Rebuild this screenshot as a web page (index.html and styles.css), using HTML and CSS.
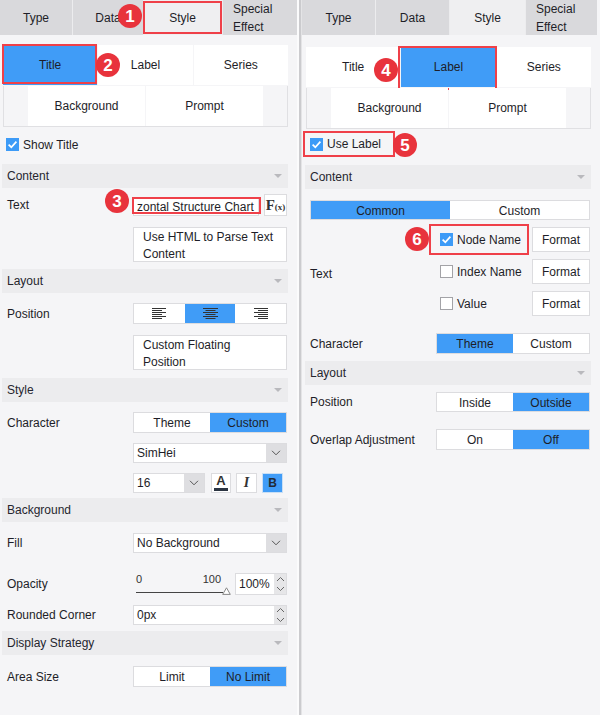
FILE: index.html
```html
<!DOCTYPE html>
<html>
<head>
<meta charset="utf-8">
<link rel="stylesheet" href="styles.css">
</head>
<body>
<div class="app">

  <div class="panel panel-left">
    <div class="tabs">
      <div class="tab t-type">Type</div>
      <div class="tab t-data">Data</div>
      <div class="tab t-style active mark-tab">Style</div>
      <div class="tab special">Special<br>Effect</div>
    </div>
    <div class="content">
      <div class="subtabs">
        <div class="srow">
          <div class="st sel mark-title">Title</div>
          <div class="st">Label</div>
          <div class="st">Series</div>
        </div>
        <div class="srow2">
          <div class="st">Background</div>
          <div class="st">Prompt</div>
        </div>
      </div>

      <div class="checkrow mt5">
        <span class="cb on"><svg width="13" height="13" viewBox="0 0 13 13"><path d="M2.6 6.6 L5.3 9.2 L10.4 3.6" fill="none" stroke="#fff" stroke-width="1.7"/></svg></span>
        <span>Show Title</span>
      </div>

      <div class="hdr mt7">Content</div>
      <div class="row h22 mt6 endrow">
        <div class="lbl">Text</div>
        <div class="ctl ctl-end">
          <div class="input box txt mark-input">zontal Structure Chart</div>
          <div class="fx box"><span class="fxF">F</span><span class="fxX">(x)</span></div>
        </div>
      </div>
      <div class="row mt11 nolbl">
        <div class="ctl"><div class="tbox box">Use HTML to Parse Text<br>Content</div></div>
      </div>

      <div class="hdr mt7">Layout</div>
      <div class="row h21 mt10">
        <div class="lbl">Position</div>
        <div class="ctl">
          <div class="seg seg3">
            <div><svg width="15" height="11" viewBox="0 0 15 11"><g stroke="#333" stroke-width="1"><path d="M0 0.5H14"/><path d="M0 2.5H10"/><path d="M0 4.5H14"/><path d="M0 6.5H10"/><path d="M0 8.5H14"/><path d="M0 10.5H10"/></g></svg></div>
            <div class="on"><svg width="15" height="11" viewBox="0 0 15 11"><g stroke="#333" stroke-width="1"><path d="M0 0.5H15"/><path d="M2.5 2.5H12.5"/><path d="M0 4.5H15"/><path d="M2.5 6.5H12.5"/><path d="M0 8.5H15"/><path d="M2.5 10.5H12.5"/></g></svg></div>
            <div><svg width="15" height="11" viewBox="0 0 15 11"><g stroke="#333" stroke-width="1"><path d="M1 0.5H15"/><path d="M5 2.5H15"/><path d="M1 4.5H15"/><path d="M5 6.5H15"/><path d="M1 8.5H15"/><path d="M5 10.5H15"/></g></svg></div>
          </div>
        </div>
      </div>
      <div class="row mt11 nolbl">
        <div class="ctl"><div class="tbox box">Custom Floating<br>Position</div></div>
      </div>

      <div class="hdr mt8">Style</div>
      <div class="row h21 mt10">
        <div class="lbl">Character</div>
        <div class="ctl">
          <div class="seg"><div>Theme</div><div class="on">Custom</div></div>
        </div>
      </div>
      <div class="row h20 mt10 nolbl">
        <div class="ctl">
          <div class="select box">
            <div class="val">SimHei</div>
            <div class="arr"><svg width="10" height="6" viewBox="0 0 10 6"><path d="M1 0.8 L5 4.8 L9 0.8" fill="none" stroke="#555" stroke-width="1"/></svg></div>
          </div>
        </div>
      </div>
      <div class="row h20 mt10 nolbl">
        <div class="ctl">
          <div class="select box fsize">
            <div class="val">16</div>
            <div class="arr"><svg width="10" height="6" viewBox="0 0 10 6"><path d="M1 0.8 L5 4.8 L9 0.8" fill="none" stroke="#555" stroke-width="1"/></svg></div>
          </div>
          <div class="fbtn box fa"><span class="aglyph">A</span><span class="abar"></span></div>
          <div class="fbtn box fi">I</div>
          <div class="fbtn box fb">B</div>
        </div>
      </div>

      <div class="hdr mt5">Background</div>
      <div class="row h20 mt11">
        <div class="lbl">Fill</div>
        <div class="ctl">
          <div class="select box">
            <div class="val">No Background</div>
            <div class="arr"><svg width="10" height="6" viewBox="0 0 10 6"><path d="M1 0.8 L5 4.8 L9 0.8" fill="none" stroke="#555" stroke-width="1"/></svg></div>
          </div>
        </div>
      </div>
      <div class="row h22 mt20">
        <div class="lbl">Opacity</div>
        <div class="ctl">
          <div class="slider">
            <div class="slabels"><span>0</span><span>100</span></div>
            <div class="strack"><span class="sline"></span><svg class="stri" width="9" height="8" viewBox="0 0 9 8"><path d="M0.7 7.4 L4.5 0.8 L8.3 7.4 Z" fill="#fff" stroke="#888" stroke-width="1"/></svg></div>
          </div>
          <div class="select box pct">
            <div class="val">100%</div>
            <div class="spin"><svg width="9" height="18" viewBox="0 0 9 18"><path d="M1 6 L4.5 2.5 L8 6" fill="none" stroke="#666" stroke-width="1"/><path d="M1 12 L4.5 15.5 L8 12" fill="none" stroke="#666" stroke-width="1"/></svg></div>
          </div>
        </div>
      </div>
      <div class="row h20 mt10">
        <div class="lbl">Rounded Corner</div>
        <div class="ctl">
          <div class="select box">
            <div class="val">0px</div>
            <div class="spin"><svg width="9" height="18" viewBox="0 0 9 18"><path d="M1 6 L4.5 2.5 L8 6" fill="none" stroke="#666" stroke-width="1"/><path d="M1 12 L4.5 15.5 L8 12" fill="none" stroke="#666" stroke-width="1"/></svg></div>
          </div>
        </div>
      </div>

      <div class="hdr mt6">Display Strategy</div>
      <div class="row h21 mt11">
        <div class="lbl">Area Size</div>
        <div class="ctl">
          <div class="seg"><div>Limit</div><div class="on">No Limit</div></div>
        </div>
      </div>
    </div>

    <div class="badge b1">1</div>
    <div class="badge b2">2</div>
    <div class="badge b3">3</div>
  </div>

  <div class="divider"></div>

  <div class="panel panel-right">
    <div class="tabs">
      <div class="tab t-type">Type</div>
      <div class="tab t-data">Data</div>
      <div class="tab t-style active">Style</div>
      <div class="tab special">Special<br>Effect</div>
    </div>
    <div class="content">
      <div class="subtabs">
        <div class="srow">
          <div class="st">Title</div>
          <div class="st sel mark-label">Label</div>
          <div class="st">Series</div>
        </div>
        <div class="srow2">
          <div class="st">Background</div>
          <div class="st">Prompt</div>
        </div>
      </div>

      <div class="checkrow uselabel">
        <span class="cb on"><svg width="13" height="13" viewBox="0 0 13 13"><path d="M2.6 6.6 L5.3 9.2 L10.4 3.6" fill="none" stroke="#fff" stroke-width="1.7"/></svg></span>
        <span>Use Label</span>
      </div>

      <div class="hdr mt8">Content</div>
      <div class="row h20 mt11">
        <div class="seg full"><div class="on">Common</div><div>Custom</div></div>
      </div>

      <div class="row mt7 textopts">
        <div class="lbl lbl-text">Text</div>
        <div class="opts">
          <div class="opt">
            <div class="optitem mark-node"><span class="cb on"><svg width="13" height="13" viewBox="0 0 13 13"><path d="M2.6 6.6 L5.3 9.2 L10.4 3.6" fill="none" stroke="#fff" stroke-width="1.7"/></svg></span><span>Node Name</span></div>
            <div class="fmt box">Format</div>
          </div>
          <div class="opt">
            <div class="optitem"><span class="cb"></span><span>Index Name</span></div>
            <div class="fmt box">Format</div>
          </div>
          <div class="opt">
            <div class="optitem"><span class="cb"></span><span>Value</span></div>
            <div class="fmt box">Format</div>
          </div>
        </div>
      </div>

      <div class="row h21 mt17">
        <div class="lbl">Character</div>
        <div class="ctl">
          <div class="seg"><div class="on">Theme</div><div>Custom</div></div>
        </div>
      </div>

      <div class="hdr mt7">Layout</div>
      <div class="row h20 mt7">
        <div class="lbl">Position</div>
        <div class="ctl">
          <div class="seg"><div>Inside</div><div class="on">Outside</div></div>
        </div>
      </div>
      <div class="row h21 mt17">
        <div class="lbl">Overlap Adjustment</div>
        <div class="ctl">
          <div class="seg"><div>On</div><div class="on">Off</div></div>
        </div>
      </div>
    </div>

    <div class="badge b4">4</div>
    <div class="badge b5">5</div>
    <div class="badge b6">6</div>
  </div>

</div>
</body>
</html>
```

FILE: styles.css
```css
* { box-sizing: border-box; }
html, body { margin: 0; padding: 0; }
body {
  width: 600px;
  height: 715px;
  overflow: hidden;
  background: #f5f5f7;
  font-family: "Liberation Sans", Arial, sans-serif;
  font-size: 12px;
  color: #1e1e28;
}
.app { display: flex; height: 715px; }
.panel { position: relative; height: 715px; background: #f5f5f7; }
.panel-left { width: 297px; }
.panel-right { width: 298px; }
.divider {
  width: 5px;
  height: 715px;
  background: linear-gradient(to right, #fbfbfc 0, #fbfbfc 2px, #cbcbce 2px, #cbcbce 4px, #e4e4e6 4px);
}

/* top tabs */
.tabs { display: flex; height: 35px; background: #d9d9dc; }
.panel-right .tabs { margin-right: 3px; }
.tab {
  position: relative;
  display: flex;
  align-items: center;
  justify-content: center;
  border-right: 1px solid #ececee;
}
.t-type { width: 73px; }
.t-data { width: 70px; border-right: none; }
.t-style { width: 80px; }
.panel-right .t-type { width: 74px; }
.panel-right .t-data { width: 74px; border-right: 1px solid #ececee; }
.panel-right .t-style { width: 76px; }
.tab.active { background: #efeff1; }
.tab.special {
  flex: 1;
  justify-content: flex-start;
  padding-left: 10px;
  line-height: 18px;
  border-right: none;
}

/* red annotation boxes */
.mark-tab::after,
.mark-title::after,
.mark-label::after,
.mark-input::after,
.mark-node::after {
  content: "";
  position: absolute;
  border: 2px solid #ef4049;
  pointer-events: none;
}
.mark-tab::after { top: 1px; bottom: 1px; left: 0; right: 0; }
.mark-title::after { top: -1px; bottom: 1px; left: -1px; right: 0; }
.mark-label::after { top: -1px; bottom: -3px; left: -3px; right: -1px; }
.mark-input::after { top: -1px; bottom: 1px; left: -2px; right: -3px; }
.mark-node::after { top: -3px; bottom: -3px; left: -7px; right: 3px; }

/* badges */
.badge {
  position: absolute;
  width: 24px;
  height: 24px;
  border-radius: 50%;
  background: #e8333c;
  color: #fff;
  font-weight: bold;
  font-size: 17px;
  line-height: 1;
  display: flex;
  align-items: center;
  justify-content: center;
  z-index: 3;
}
.b1 { left: 118px; top: 4px; }
.b2 { left: 96px; top: 53px; }
.b3 { left: 105px; top: 189px; }
.b4 { left: 72px; top: 58px; }
.b5 { left: 91px; top: 133px; }
.b6 { left: 103px; top: 227px; }

/* content */
.content { padding: 0 9px 0 2px; }
.panel-right .content { padding-left: 3px; }

.subtabs { margin: 10px 0 0 1px; }
.panel-right .subtabs { margin-top: 12px; }
.srow { display: flex; gap: 1px; }
.st {
  position: relative;
  height: 40px;
  background: #fff;
  display: flex;
  align-items: center;
  justify-content: center;
}
.srow .st { flex: 1; }
.st.sel { background: #409cf7; }
.srow2 {
  display: flex;
  justify-content: center;
  gap: 1px;
  margin-top: 1px;
  height: 41px;
  border: 1px solid #e0e0e3;
  border-top: none;
}
.srow2 .st { width: 117px; }

.mt5 { margin-top: 5px; }
.mt6 { margin-top: 6px; }
.mt7 { margin-top: 7px; }
.mt8 { margin-top: 8px; }
.mt10 { margin-top: 10px; }
.mt11 { margin-top: 11px; }
.mt17 { margin-top: 17px; }
.mt20 { margin-top: 20px; }
.h20 { height: 20px; }
.h21 { height: 21px; }
.h22 { height: 22px; }

.checkrow {
  display: flex;
  align-items: center;
  gap: 4px;
  height: 25px;
  padding-left: 4px;
}
.uselabel {
  margin: 2px 0 0 -2px;
  width: 92px;
  height: 26px;
  border: 2px solid #ef4049;
  padding-left: 5px;
}
.cb {
  display: block;
  width: 13px;
  height: 13px;
  flex: 0 0 13px;
  background: #fff;
  border: 1px solid #a3a3a7;
}
.cb.on { background: #3d9bf7; border: none; }
.cb svg { display: block; }

.hdr {
  position: relative;
  height: 24px;
  background: #ececee;
  display: flex;
  align-items: center;
  padding-left: 5px;
  color: #26262e;
}
.hdr::after {
  content: "";
  position: absolute;
  right: 6px;
  top: 10px;
  border-left: 4px solid transparent;
  border-right: 4px solid transparent;
  border-top: 4px solid #b9b9bd;
}

.row { display: flex; align-items: center; padding: 0 1px 0 5px; }
.row.nolbl { padding-left: 131px; }
.row.endrow { align-items: center; }
.lbl { flex: 0 0 126px; }
.ctl { flex: 1; min-width: 0; display: flex; align-items: center; height: 100%; }
.ctl-end { align-items: flex-end; }

.box { background: #fff; border: 1px solid #dcdcdf; }

.txt {
  position: relative;
  width: 126px;
  height: 19px;
  display: flex;
  align-items: center;
  padding-left: 3px;
  white-space: nowrap;
  overflow: visible;
}
.fx {
  margin-left: auto;
  width: 23px;
  height: 22px;
  display: flex;
  align-items: center;
  justify-content: center;
  font-family: "Liberation Serif", "Times New Roman", serif;
  font-weight: bold;
  color: #333;
}
.fxF { font-size: 15px; }
.fxX { font-size: 9px; margin-top: 3px; }

.tbox {
  width: 100%;
  height: 35px;
  padding: 1px 6px 0 9px;
  line-height: 17px;
}

.seg {
  display: flex;
  width: 100%;
  height: 100%;
  border: 1px solid #dcdcdf;
  background: #fff;
}
.seg > div {
  flex: 1;
  display: flex;
  align-items: center;
  justify-content: center;
  padding-top: 1px;
}
.seg .on { background: #409cf7; }
.seg.full { width: 100%; }
.seg3 > div { padding-top: 0; }

.select {
  display: flex;
  width: 100%;
  height: 20px;
}
.select .val {
  flex: 1;
  display: flex;
  align-items: center;
  padding-left: 3px;
}
.select .arr {
  width: 20px;
  background: #dedee1;
  display: flex;
  align-items: center;
  justify-content: center;
}
.select .spin {
  width: 12px;
  background: #e6e6e8;
  display: flex;
  align-items: center;
  justify-content: center;
}
.spin svg { display: block; }

.fsize { width: 72px; flex: 0 0 72px; }
.fbtn {
  height: 20px;
  width: 21px;
  flex: 0 0 21px;
  display: flex;
  align-items: center;
  justify-content: center;
  margin-left: 5px;
}
.fa {
  width: 20px;
  flex-basis: 20px;
  margin-left: 6px;
  flex-direction: column;
  gap: 0;
}
.aglyph { font-weight: bold; font-size: 13px; line-height: 12px; color: #333; }
.abar { display: block; width: 14px; height: 3px; background: #2b3442; margin-top: 1px; }
.fi {
  font-family: "Liberation Serif", "Times New Roman", serif;
  font-style: italic;
  font-weight: bold;
  font-size: 14px;
  color: #333;
}
.fb {
  background: #409cf7;
  border-color: #c9dff5;
  font-weight: bold;
  font-size: 12px;
  color: #222a36;
}

.slider {
  flex: 0 0 102px;
  height: 22px;
  display: flex;
  flex-direction: column;
  padding-left: 3px;
}
.slabels {
  display: flex;
  justify-content: space-between;
  width: 85px;
  font-size: 11px;
  line-height: 11px;
  color: #333;
  margin-top: 1px;
}
.strack { display: flex; align-items: flex-end; margin-top: 2px; }
.sline { display: block; width: 87px; height: 1px; background: #444; margin-bottom: 2px; }
.stri { display: block; margin-left: -1px; }
.pct { width: 52px; flex: 0 0 52px; height: 22px; }

.textopts { align-items: flex-start; }
.lbl-text { padding-top: 40px; }
.opts { flex: 1; display: flex; flex-direction: column; gap: 7px; }
.opt { display: flex; height: 25px; }
.optitem {
  position: relative;
  flex: 1;
  display: flex;
  align-items: center;
  gap: 4px;
  padding-left: 4px;
}
.fmt {
  width: 58px;
  display: flex;
  align-items: center;
  justify-content: center;
}
```
